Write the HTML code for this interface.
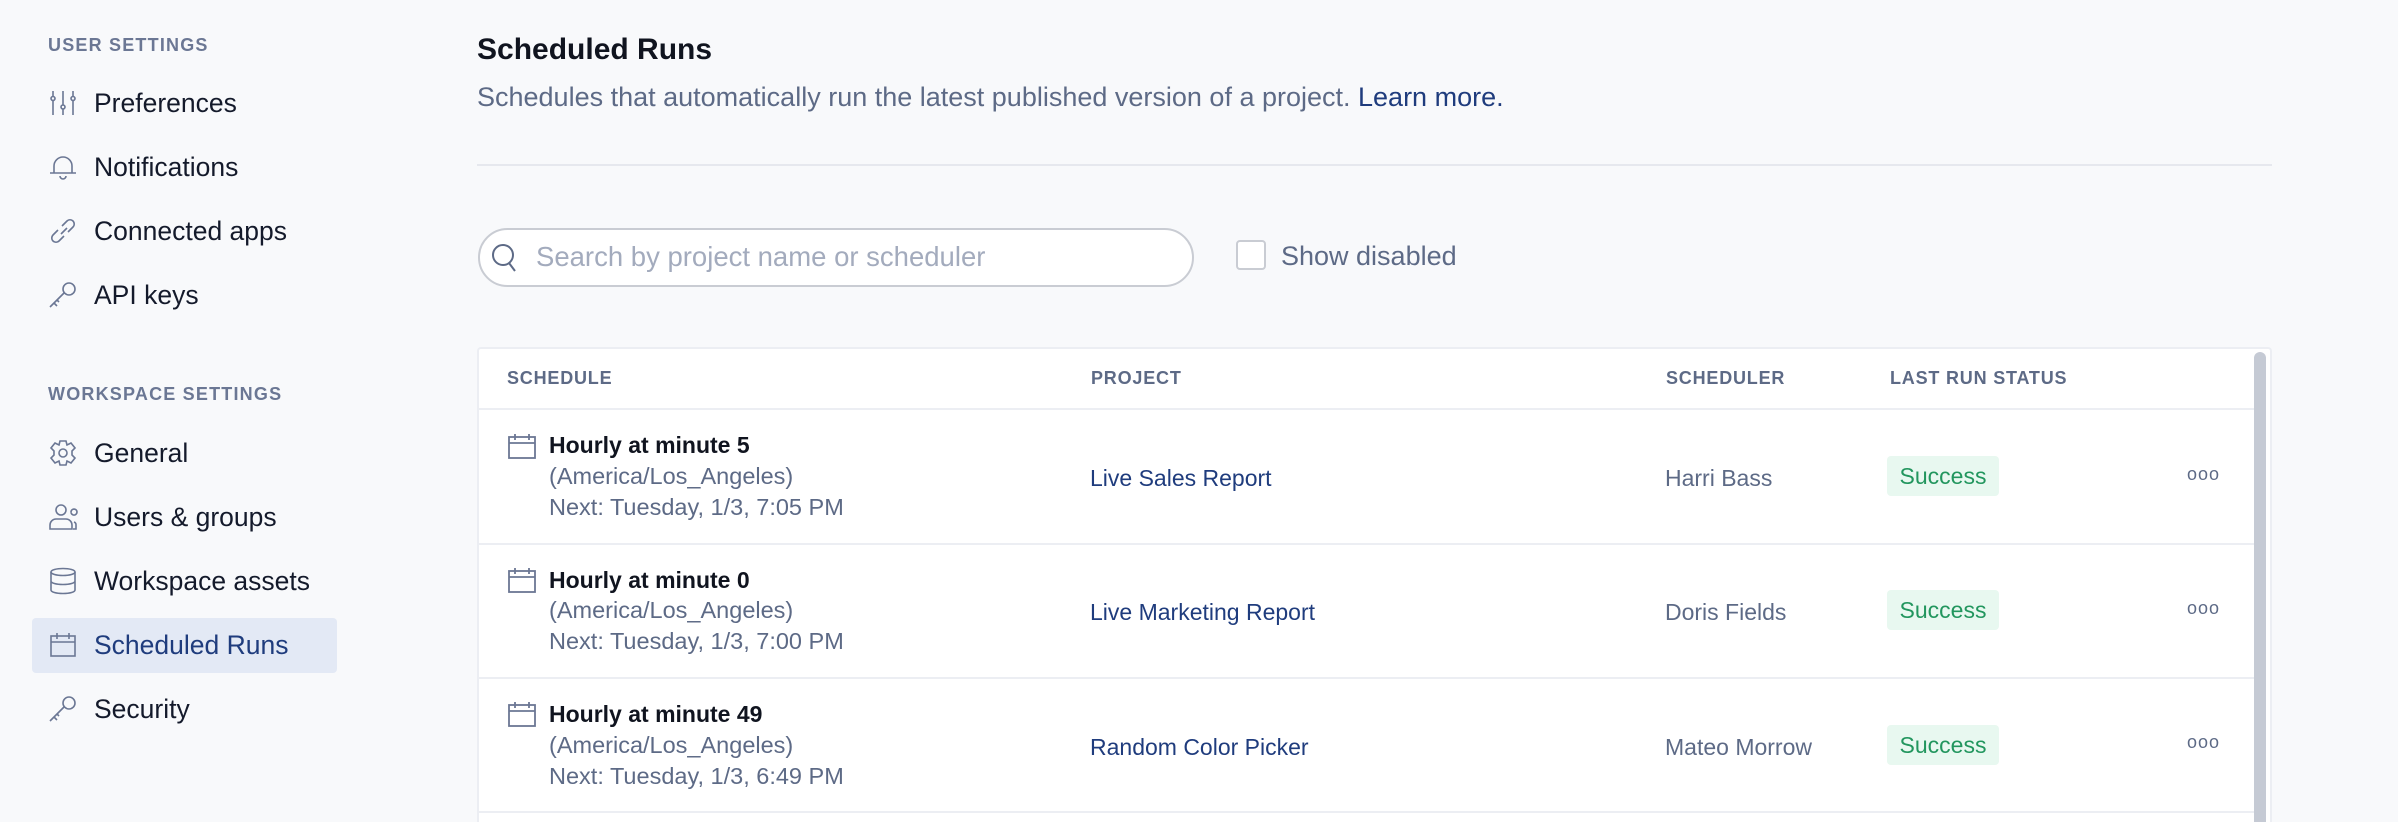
<!DOCTYPE html>
<html style="width:2398px;height:822px;overflow:hidden"><head><meta charset="utf-8"><style>
*{box-sizing:border-box;margin:0;padding:0}
body{width:2398px;height:822px;overflow:hidden;background:#f8f9fb;font-family:"Liberation Sans",sans-serif;color:#1c2133;position:relative}
.abs{position:absolute}
.sec{position:absolute;left:48px;font-size:18px;font-weight:700;letter-spacing:1.2px;color:#6b7794}
.item{position:absolute;left:48px;height:40px;display:flex;align-items:center;font-size:26.5px;color:#141a2b}
.item svg{width:30px;height:30px;margin-right:16px;stroke:#6b7794;fill:none;stroke-width:1.6}
.sel{position:absolute;left:32px;top:618px;width:305px;height:55px;background:#e3e9f5;border-radius:4px}
.th{position:absolute;top:368px;font-size:18px;font-weight:700;letter-spacing:.8px;color:#5d6a86}
.line{position:absolute;left:478px;width:1776px;height:2px;background:#eceef3}
.t1{position:absolute;left:549px;font-size:23px;font-weight:700;color:#10141f}
.t2{position:absolute;left:549px;font-size:23.5px;color:#5d6a86}
.proj{position:absolute;left:1090px;font-size:23px;color:#1f3c7d}
.user{position:absolute;left:1665px;font-size:23px;color:#5d6a86}
.badge{position:absolute;left:1887px;width:112px;height:40px;background:#e8f8f0;color:#22965e;font-size:23px;border-radius:4px;display:flex;align-items:center;justify-content:center}
.dots{position:absolute;left:2187px;font-size:18px;color:#5d6a86;letter-spacing:1px}
.cal{position:absolute;left:508px;width:28px;height:26px}
</style></head><body>
<div class="sec" style="top:35px">USER SETTINGS</div>
<div class="item" style="top:83px"><svg viewBox="0 0 30 30"><path d="M5 3v5M5 13v14M15 3v14M15 21v6M25 3v5M25 13v14"/><circle cx="5" cy="10.5" r="2"/><circle cx="15" cy="19" r="2"/><circle cx="25" cy="10.5" r="2"/></svg>Preferences</div>
<div class="item" style="top:147px"><svg viewBox="0 0 30 30"><path d="M6 21V14a9 9 0 0 1 18 0v7M2 21h26M12 24a3 3 0 0 0 6 0"/></svg>Notifications</div>
<div class="item" style="top:211px"><svg viewBox="0 0 30 30"><path d="M13 18l6-6M10 14l-5 5a4 4 0 0 0 6 6l5-5M20 16l5-5a4 4 0 0 0-6-6l-5 5"/></svg>Connected apps</div>
<div class="item" style="top:275px"><svg viewBox="0 0 30 30"><circle cx="21" cy="9" r="6"/><path d="M16 13L2 27M6 23l3 3M9 20l2 2"/></svg>API keys</div>
<div class="sec" style="top:384px">WORKSPACE SETTINGS</div>
<div class="item" style="top:433px"><svg viewBox="0 0 30 30"><circle cx="15" cy="15" r="4"/><path d="M12 3h6l1 4 4-2 4 5-3 3v4l3 3-4 5-4-2-1 4h-6l-1-4-4 2-4-5 3-3v-4l-3-3 4-5 4 2z"/></svg>General</div>
<div class="item" style="top:497px"><svg viewBox="0 0 30 30"><circle cx="13" cy="8" r="5"/><path d="M2 27v-4a6 6 0 0 1 6-6h10a6 6 0 0 1 6 6v4zM23 10a3 3 0 1 1 0 .1M26 20a3 3 0 0 1 2 3v4h-3"/></svg>Users &amp; groups</div>
<div class="item" style="top:561px"><svg viewBox="0 0 30 30"><ellipse cx="15" cy="6" rx="12" ry="3.5"/><path d="M3 6v18c0 2 5 3.5 12 3.5S27 26 27 24V6M3 15c0 2 5 3.5 12 3.5S27 17 27 15"/></svg>Workspace assets</div>
<div class="sel"></div>
<div class="item" style="top:625px;color:#1f3c7d"><svg viewBox="0 0 30 30"><rect x="3" y="6" width="24" height="20"/><path d="M3 12h24M9 3v6M21 3v6"/></svg>Scheduled Runs</div>
<div class="item" style="top:689px"><svg viewBox="0 0 30 30"><circle cx="21" cy="9" r="6"/><path d="M16 13L2 27M6 23l3 3M9 20l2 2"/></svg>Security</div>

<div class="abs" style="left:477px;top:33px;font-size:30px;font-weight:700;color:#10141f">Scheduled Runs</div>
<div class="abs" style="left:477px;top:82px;font-size:27px;color:#5d6a86">Schedules that automatically run the latest published version of a project. <span style="color:#1f3c7d">Learn more.</span></div>
<div class="abs" style="left:477px;top:164px;width:1795px;height:2px;background:#e6e8ee"></div>

<div class="abs" style="left:478px;top:228px;width:716px;height:59px;border:2px solid #c9ccd3;border-radius:30px;background:#fff"></div>
<svg class="abs" style="left:490px;top:241px" width="30" height="34" viewBox="0 0 30 34" fill="none" stroke="#5d6a86" stroke-width="2"><circle cx="13" cy="14" r="10"/><path d="M19 22l6 8"/></svg>
<div class="abs" style="left:536px;top:241px;font-size:27.5px;color:#a3abbd">Search by project name or scheduler</div>
<div class="abs" style="left:1236px;top:240px;width:30px;height:30px;border:2px solid #c9ccd3;border-radius:4px;background:#fff"></div>
<div class="abs" style="left:1281px;top:241px;font-size:27px;color:#5d6a86">Show disabled</div>

<div class="abs" style="left:477px;top:347px;width:1795px;height:475px;border:2px solid #eceef3;border-bottom:none;border-radius:4px 4px 0 0;background:#fff"></div>
<div class="abs" style="left:2254px;top:352px;width:12px;height:470px;background:#c5cad4;border-radius:6px 6px 0 0"></div>
<div class="th" style="left:507px">SCHEDULE</div>
<div class="th" style="left:1091px">PROJECT</div>
<div class="th" style="left:1666px">SCHEDULER</div>
<div class="th" style="left:1890px">LAST RUN STATUS</div>
<div class="line" style="top:408px"></div>
<div class="line" style="top:543px"></div>
<div class="line" style="top:677px"></div>
<div class="line" style="top:811px"></div>

<svg class="cal" style="top:433px" viewBox="0 0 28 26" fill="none" stroke="#6b7794" stroke-width="1.8"><rect x="1" y="4" width="26" height="21"/><path d="M1 10h26M7 1v6M21 1v6"/></svg>
<div class="t1" style="top:432px">Hourly at minute 5</div>
<div class="t2" style="top:463px">(America/Los_Angeles)</div>
<div class="t2" style="top:494px">Next: Tuesday, 1/3, 7:05 PM</div>
<div class="proj" style="top:465px">Live Sales Report</div>
<div class="user" style="top:465px">Harri Bass</div>
<div class="badge" style="top:456px">Success</div>
<div class="dots" style="top:464px">ooo</div>

<svg class="cal" style="top:567px" viewBox="0 0 28 26" fill="none" stroke="#6b7794" stroke-width="1.8"><rect x="1" y="4" width="26" height="21"/><path d="M1 10h26M7 1v6M21 1v6"/></svg>
<div class="t1" style="top:567px">Hourly at minute 0</div>
<div class="t2" style="top:597px">(America/Los_Angeles)</div>
<div class="t2" style="top:628px">Next: Tuesday, 1/3, 7:00 PM</div>
<div class="proj" style="top:599px">Live Marketing Report</div>
<div class="user" style="top:599px">Doris Fields</div>
<div class="badge" style="top:590px">Success</div>
<div class="dots" style="top:598px">ooo</div>

<svg class="cal" style="top:701px" viewBox="0 0 28 26" fill="none" stroke="#6b7794" stroke-width="1.8"><rect x="1" y="4" width="26" height="21"/><path d="M1 10h26M7 1v6M21 1v6"/></svg>
<div class="t1" style="top:701px">Hourly at minute 49</div>
<div class="t2" style="top:732px">(America/Los_Angeles)</div>
<div class="t2" style="top:763px">Next: Tuesday, 1/3, 6:49 PM</div>
<div class="proj" style="top:734px">Random Color Picker</div>
<div class="user" style="top:734px">Mateo Morrow</div>
<div class="badge" style="top:725px">Success</div>
<div class="dots" style="top:732px">ooo</div>
</body></html>
